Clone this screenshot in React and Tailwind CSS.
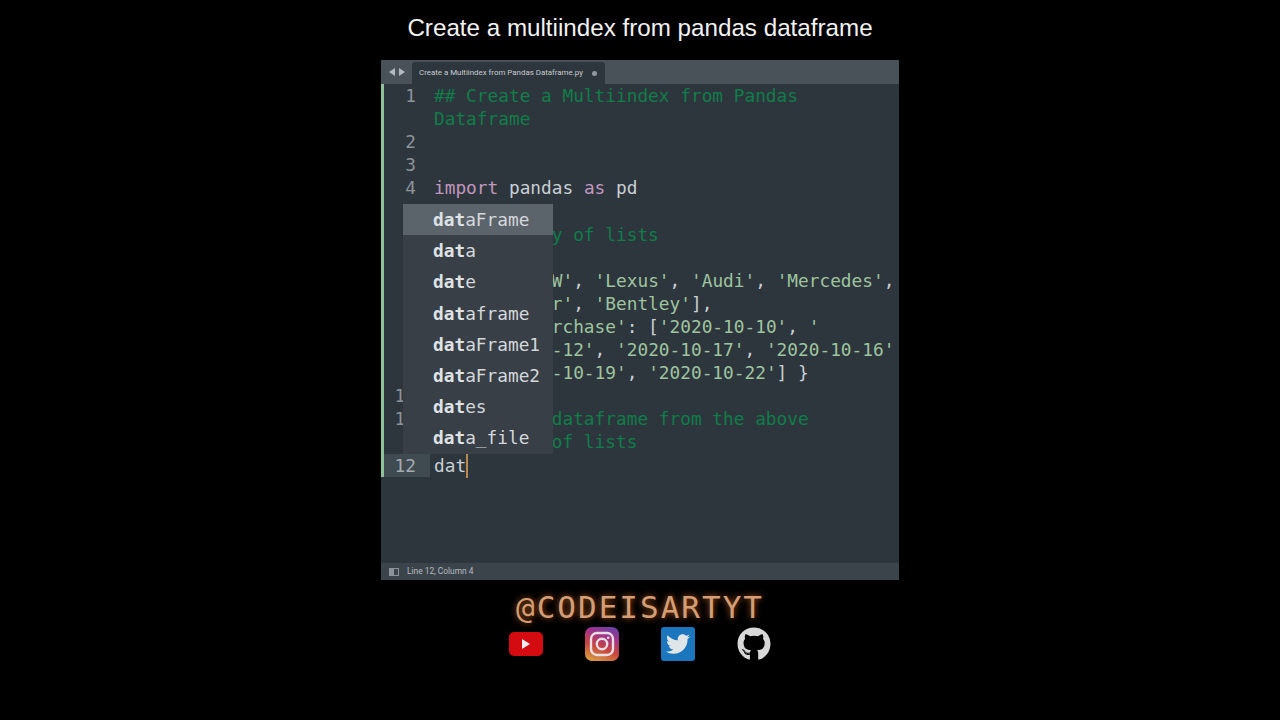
import React from "react";
import { FaGithub, FaTwitter } from "react-icons/fa";

const C = ({ children }) => <span className="text-[#0f7d49]">{children}</span>;
const S = ({ children }) => <span className="text-[#9ec49f]">{children}</span>;
const P = ({ children }) => <span className="text-[#c9cfd4]">{children}</span>;

// each row: line number (or empty for a wrapped line) and its code
const ROWS = [
  ["1", <C>## Create a Multiindex from Pandas</C>],
  ["", <C>Dataframe</C>],
  ["2", null],
  ["3", null],
  ["4", <><span className="text-[#c196bd]">import</span> <P>pandas</P> <span className="text-[#c196bd]">as</span> <P>pd</P></>],
  ["5", null],
  ["6", <C># Dictionary of lists</C>],
  ["7", <P>details = {"{"}</P>],
  ["8", <><S>'Car'</S><P>: [</P><S>'BMW'</S><P>, </P><S>'Lexus'</S><P>, </P><S>'Audi'</S><P>, </P><S>'Mercedes'</S><P>,</P></>],
  ["", <><S>     'Jaguar'</S><P>, </P><S>'Bentley'</S><P>],</P></>],
  ["9", <><S>'Date_of_Purchase'</S><P>: [</P><S>'2020-10-10'</S><P>, </P><S>'</S></>],
  ["", <><S>    2020-10-12'</S><P>, </P><S>'2020-10-17'</S><P>, </P><S>'2020-10-16'</S></>],
  ["", <><S>    , '2020-10-19'</S><P>, </P><S>'2020-10-22'</S><P>] {"}"}</P></>],
  ["10", null],
  ["11", <C># Create a dataframe from the above</C>],
  ["", <C>dictionary of lists</C>],
];

const COMPLETIONS = [
  ["dat", "aFrame"],
  ["dat", "a"],
  ["dat", "e"],
  ["dat", "aframe"],
  ["dat", "aFrame1"],
  ["dat", "aFrame2"],
  ["dat", "es"],
  ["dat", "a_file"],
];

function Instagram() {
  return (
    <div className="w-[34px] h-[34px] rounded-[7px] flex items-center justify-center bg-[linear-gradient(20deg,#d9a040_5%,#c9453f_40%,#a2348c_70%,#5a45a8_100%)]">
      <svg width="26" height="26" viewBox="0 0 26 26" fill="none" stroke="#e6e0e4" strokeWidth="2.4">
        <rect x="2" y="2" width="22" height="22" rx="6" />
        <circle cx="13" cy="13" r="5.2" />
        <circle cx="19.2" cy="6.8" r="1.3" fill="#e6e0e4" stroke="none" />
      </svg>
    </div>
  );
}

export default function App() {
  return (
    <div className="w-[1280px] h-[720px] bg-black flex flex-col items-center overflow-hidden font-['Liberation_Sans',sans-serif]">
      <h1 className="h-[60px] pb-[4px] flex items-center text-[24.2px] leading-none font-normal text-[#f2f2f2]">
        Create a multiindex from pandas dataframe
      </h1>

      <div className="w-[518px] h-[520px] bg-[#2e363d] flex flex-col">
        {/* Tab bar */}
        <div className="h-[24px] bg-[#4a5259] flex items-end shrink-0">
          <div className="w-[31px] h-full flex items-center justify-center gap-[4px] pb-[1px]">
            <span className="w-0 h-0 border-y-[4px] border-y-transparent border-r-[6px] border-r-[#b4babf]" />
            <span className="w-0 h-0 border-y-[4px] border-y-transparent border-l-[6px] border-l-[#b4babf]" />
          </div>
          <div className="w-[193px] h-[22px] bg-[#2e363d] rounded-t-[3px] flex items-center pl-[7px] gap-[9px]">
            <span className="text-[7.9px] font-['Roboto',sans-serif] text-[#c6cbcf] whitespace-nowrap">Create a Multiindex from Pandas Dataframe.py</span>
            <span className="w-[5px] h-[5px] shrink-0 rounded-full bg-[#8f979d]" />
          </div>
        </div>

        {/* Code area */}
        <div className="relative flex-1 font-['DejaVu_Sans_Mono',monospace] text-[17.8px] leading-[23.1px] whitespace-pre">
          <div className="border-l-[3px] border-[#8fc29a]">
            {ROWS.map(([num, code], i) => (
              <div key={i} className="flex h-[23.1px]">
                <div className="w-[32px] shrink-0 text-right text-[#8b9399]">{num}</div>
                <div className="pl-[18px]">{code}</div>
              </div>
            ))}
            <div className="flex h-[23.1px]">
              <div className="w-[46px] shrink-0 bg-[#3f4a51] pr-[14px] text-right text-[#a4acb2]">12</div>
              <div className="pl-[4px] text-[#c9cfd4] flex">
                dat<span className="w-[2px] h-[24px] bg-[#b98a50]" />
              </div>
            </div>
          </div>

          {/* Autocomplete popup */}
          <div className="absolute left-[22px] top-[120px] w-[150px] bg-[#383f46]">
            {COMPLETIONS.map(([match, rest], i) => (
              <div key={i} className={`h-[31.2px] pl-[30px] flex items-center ${i === 0 ? "bg-[#5c646b]" : ""}`}>
                <span className="font-bold text-[#dfe2e5]">{match}</span>
                <span className="text-[#d3d7db]">{rest}</span>
              </div>
            ))}
          </div>
        </div>

        {/* Status bar */}
        <div className="h-[17px] bg-[#3c444b] flex items-center pl-[8px] gap-[8px] shrink-0">
          <span className="w-[10px] h-[8px] border border-[#8d9499] flex">
            <span className="w-[4px] bg-[#8d9499]" />
          </span>
          <span className="text-[8.4px] font-['Roboto',sans-serif] text-[#b4babf]">Line 12, Column 4</span>
        </div>
      </div>

      {/* Channel handle and social icons */}
      <div className="mt-[10px] h-[34px] flex items-center font-['DejaVu_Sans_Mono',monospace] text-[31px] tracking-[2px] text-[#d39e76] [text-shadow:0_0_6px_#b4581a]">
        @CODEISARTYT
      </div>
      <div className="mt-[3px] w-[262px] flex items-center justify-between">
        <div className="w-[34px] h-[24px] rounded-[5px] bg-[#d40c12] flex items-center justify-center">
          <span className="w-0 h-0 border-y-[5px] border-y-transparent border-l-[8px] border-l-[#eeeeee]" />
        </div>
        <Instagram />
        <div className="w-[34px] h-[34px] rounded-[3px] bg-[#1b76bd] flex items-center justify-center">
          <FaTwitter className="text-[#dfe6ea]" size={24} />
        </div>
        <FaGithub className="text-[#d8d8d8]" size={34} />
      </div>
    </div>
  );
}
